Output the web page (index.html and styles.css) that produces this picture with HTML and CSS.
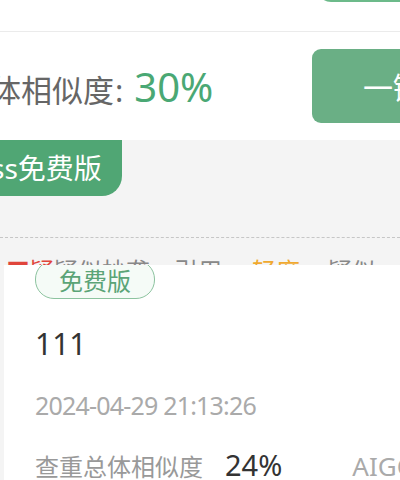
FILE: index.html
```html
<!DOCTYPE html>
<html lang="zh">
<head>
<meta charset="utf-8">
<link rel="stylesheet" href="styles.css">
</head>
<body>
<div class="page">
  <div class="top">
    <div class="top-btn"></div>
  </div>
  <div class="summary">
    <div class="summary-text">
      <span class="summary-label">总体相似度<span class="colon">:</span></span>
      <span class="summary-value">30%</span>
    </div>
    <div class="summary-btn">一键降重</div>
  </div>
  <div class="list">
    <div class="tab">ss免费版</div>
    <div class="divider"></div>
    <div class="legend">
      <span class="lg lg-red">■疑似</span>
      <span class="lg lg-gray1">疑似抄袭</span>
      <span class="lg lg-gray2">引用</span>
      <span class="lg lg-orange">轻度</span>
      <span class="lg lg-gray3">疑似</span>
    </div>
    <div class="card">
      <div class="badge">免费版</div>
      <div class="title">111</div>
      <div class="date">2024-04-29 21:13:26</div>
      <div class="stats">
        <span class="stat-label">查重总体相似度</span>
        <span class="stat-value">24%</span>
        <span class="stat-aigc">AIGC</span>
      </div>
    </div>
  </div>
</div>
</body>
</html>
```
FILE: styles.css
```css
html, body {
  margin: 0;
  padding: 0;
}
body {
  width: 400px;
  height: 480px;
  overflow: hidden;
  font-family: "Noto Sans", "Noto Sans CJK SC", sans-serif;
  background: #f4f4f4;
}
.page {
  width: 400px;
  overflow: hidden;
}
.top {
  height: 31px;
  background: #fff;
  border-bottom: 1px solid #ebebeb;
  display: flex;
  justify-content: flex-start;
  overflow: hidden;
}
.top-btn {
  margin-left: 317px;
  margin-top: -38px;
  width: 120px;
  height: 40px;
  box-sizing: border-box;
  border: 2px solid #6cba8a;
  border-radius: 14px;
  flex-shrink: 0;
}
.summary {
  height: 108px;
  background: #fff;
  display: flex;
  align-items: center;
  justify-content: space-between;
  overflow: hidden;
}
.summary-text {
  display: flex;
  align-items: baseline;
  margin-left: -41px;
}
.summary-label {
  font-family: "Noto Sans CJK SC", sans-serif;
  font-size: 31px;
  color: #666;
}
.colon {
  font-family: "Noto Sans", sans-serif;
  margin-left: 1px;
}
.summary-value {
  margin-left: 11px;
  font-size: 40px;
  color: #4aa874;
}
.summary-btn {
  flex-shrink: 0;
  width: 130px;
  height: 74px;
  margin-right: -42px;
  background: #6aaf85;
  border-radius: 9px;
  box-sizing: border-box;
  padding-left: 51px;
  line-height: 74px;
  font-family: "Noto Sans CJK SC", sans-serif;
  font-size: 30px;
  color: #fff;
  white-space: nowrap;
  overflow: hidden;
}
.list {
  background: #f4f4f4;
  padding-bottom: 40px;
}
.tab {
  display: inline-block;
  height: 56px;
  line-height: 56px;
  margin-left: -9px;
  padding-right: 20px;
  background: #50a674;
  border-radius: 0 0 20px 0;
  font-family: "Noto Sans", "Noto Sans CJK SC", sans-serif;
  font-size: 28px;
  color: #fff;
  vertical-align: top;
}
.divider {
  margin-top: 41px;
  border-top: 1px dashed #c6c6c6;
}
.legend {
  height: 42px;
  padding-top: 14px;
  font-family: "Noto Sans CJK SC", sans-serif;
  font-size: 24px;
  line-height: 36px;
  white-space: nowrap;
  display: flex;
}
.lg { display: block; }
.lg-red { color: #e0453b; margin-left: 6px; width: 48px; overflow: hidden; }
.lg-gray1 { color: #888; width: 120px; }
.lg-gray2 { color: #888; width: 78px; }
.lg-orange { color: #f0a92f; width: 76px; }
.lg-gray3 { color: #888; }
.card {
  position: relative;
  z-index: 1;
  margin-top: -29px;
  margin-left: 4px;
  background: #fff;
  padding-left: 31px;
  overflow: hidden;
}
.badge {
  display: inline-block;
  margin-top: -5px;
  height: 39px;
  line-height: 37px;
  box-sizing: border-box;
  padding: 0 23px;
  border: 1.5px solid #8cc39f;
  border-radius: 19px;
  background: #f5fbf7;
  font-family: "Noto Sans CJK SC", sans-serif;
  font-size: 24px;
  color: #5ba477;
}
.title {
  margin-top: 25px;
  font-size: 30px;
  line-height: 40px;
  color: #333;
}
.date {
  margin-top: 23px;
  font-size: 25px;
  line-height: 36px;
  color: #aaa;
  letter-spacing: -0.8px;
}
.stats {
  margin-top: 24px;
  display: flex;
  align-items: baseline;
  white-space: nowrap;
  line-height: 36px;
}
.stat-label {
  font-family: "Noto Sans CJK SC", sans-serif;
  font-size: 24px;
  color: #999;
}
.stat-value {
  margin-left: 22px;
  font-size: 29px;
  color: #333;
}
.stat-aigc {
  margin-left: 70px;
  font-size: 26px;
  color: #aaa;
}
```
